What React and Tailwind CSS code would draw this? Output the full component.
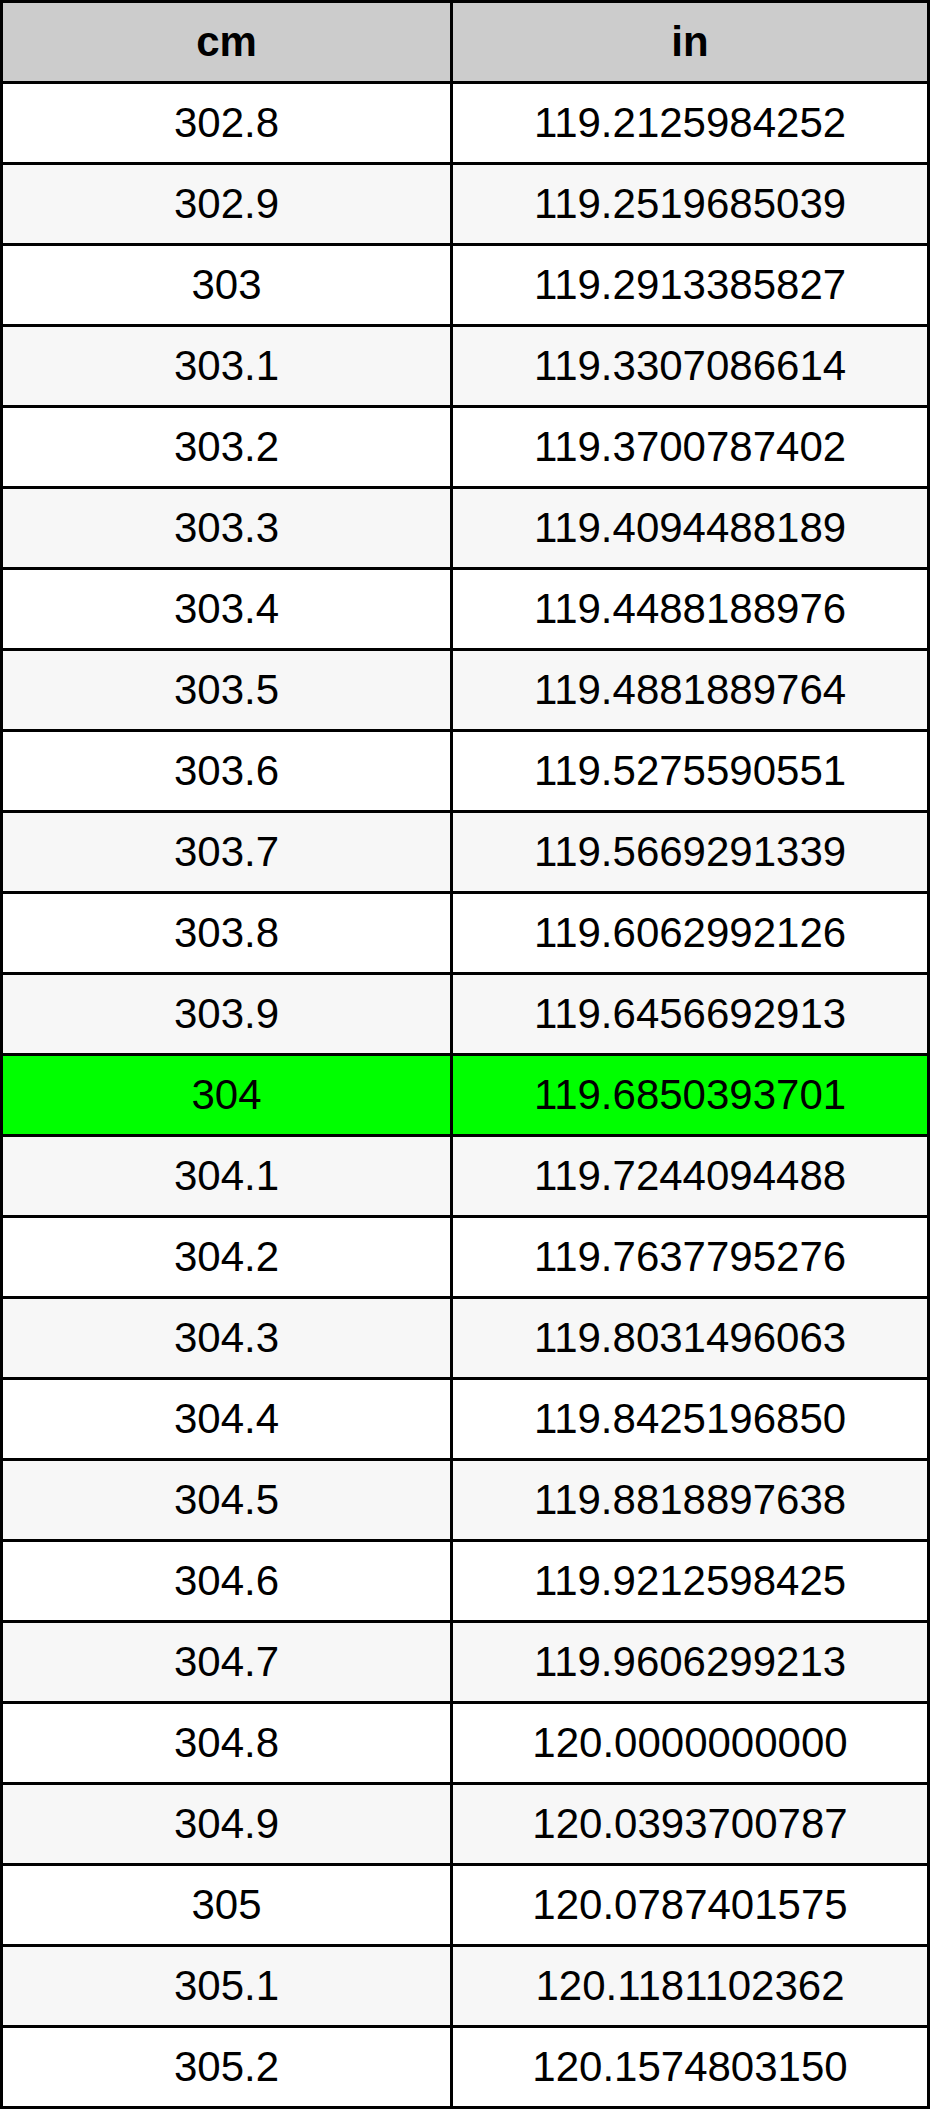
import React from "react";

const rows = [
  ["302.8", "119.2125984252"],
  ["302.9", "119.2519685039"],
  ["303", "119.2913385827"],
  ["303.1", "119.3307086614"],
  ["303.2", "119.3700787402"],
  ["303.3", "119.4094488189"],
  ["303.4", "119.4488188976"],
  ["303.5", "119.4881889764"],
  ["303.6", "119.5275590551"],
  ["303.7", "119.5669291339"],
  ["303.8", "119.6062992126"],
  ["303.9", "119.6456692913"],
  ["304", "119.6850393701"],
  ["304.1", "119.7244094488"],
  ["304.2", "119.7637795276"],
  ["304.3", "119.8031496063"],
  ["304.4", "119.8425196850"],
  ["304.5", "119.8818897638"],
  ["304.6", "119.9212598425"],
  ["304.7", "119.9606299213"],
  ["304.8", "120.0000000000"],
  ["304.9", "120.0393700787"],
  ["305", "120.0787401575"],
  ["305.1", "120.1181102362"],
  ["305.2", "120.1574803150"],
];

export default function App() {
  return (
    <div className="w-[930px] bg-white text-black font-['Liberation_Sans',Arial,sans-serif] text-[42px]">
      <div className="border-[3px] border-black">
        <div className="flex h-[78px] bg-[#cccccc] font-bold">
          <div className="w-[447px] flex items-center justify-center pb-[2px]">cm</div>
          <div className="flex-1 border-l-[3px] border-black flex items-center justify-center pb-[2px]">in</div>
        </div>
        {rows.map(([a, b], i) => {
          const hl = a === "304";
          const bg = hl ? "bg-[#00ff00]" : i % 2 === 0 ? "bg-white" : "bg-[#f7f7f7]";
          return (
            <div key={a} className={`flex h-[81px] border-t-[3px] border-black ${bg}`}>
              <div className="w-[447px] flex items-center justify-center pb-[2px]">{a}</div>
              <div className="flex-1 border-l-[3px] border-black flex items-center justify-center pb-[2px]">{b}</div>
            </div>
          );
        })}
      </div>
    </div>
  );
}
